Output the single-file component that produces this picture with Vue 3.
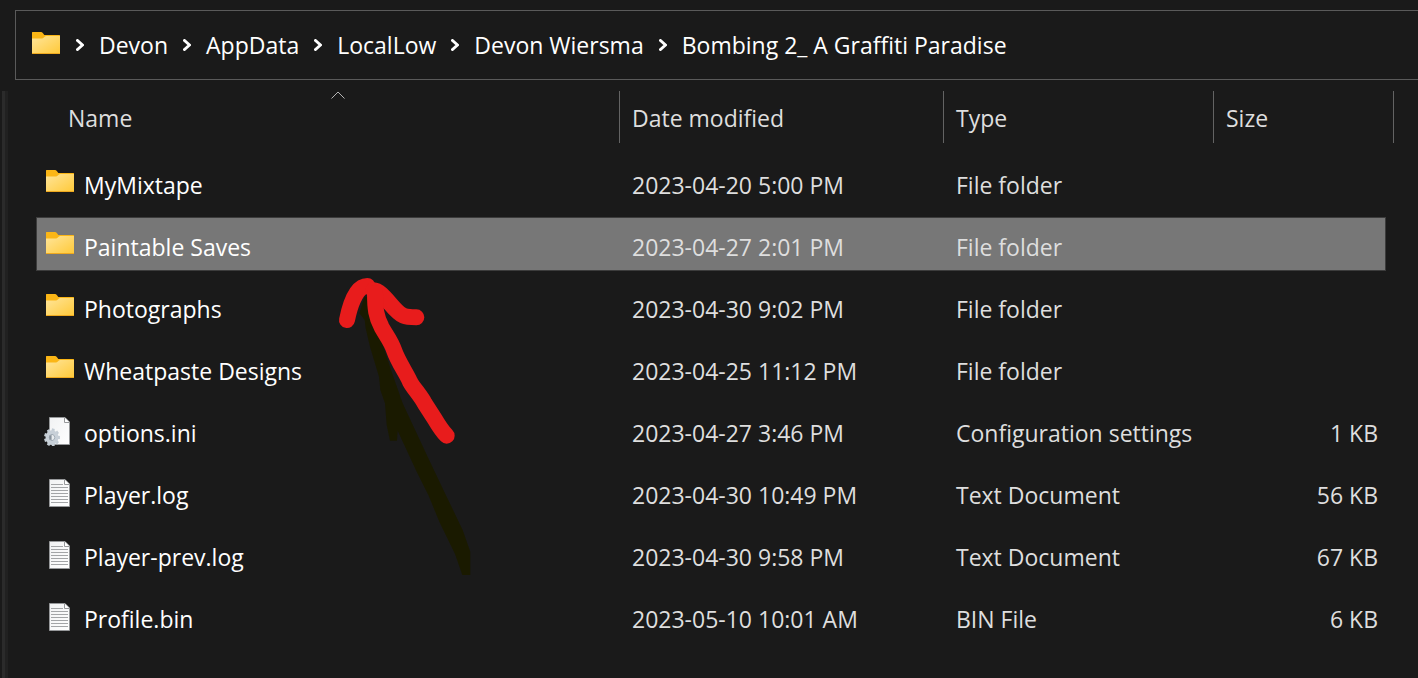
<script setup>
import { ref } from 'vue'

const crumbs = ['Devon', 'AppData', 'LocalLow', 'Devon Wiersma', 'Bombing 2_ A Graffiti Paradise']

const files = [
  { name: 'MyMixtape', date: '2023-04-20 5:00 PM', type: 'File folder', size: '', icon: 'folder' },
  { name: 'Paintable Saves', date: '2023-04-27 2:01 PM', type: 'File folder', size: '', icon: 'folder' },
  { name: 'Photographs', date: '2023-04-30 9:02 PM', type: 'File folder', size: '', icon: 'folder' },
  { name: 'Wheatpaste Designs', date: '2023-04-25 11:12 PM', type: 'File folder', size: '', icon: 'folder' },
  { name: 'options.ini', date: '2023-04-27 3:46 PM', type: 'Configuration settings', size: '1 KB', icon: 'settings' },
  { name: 'Player.log', date: '2023-04-30 10:49 PM', type: 'Text Document', size: '56 KB', icon: 'text' },
  { name: 'Player-prev.log', date: '2023-04-30 9:58 PM', type: 'Text Document', size: '67 KB', icon: 'text' },
  { name: 'Profile.bin', date: '2023-05-10 10:01 AM', type: 'BIN File', size: '6 KB', icon: 'text' }
]

const selected = ref('Paintable Saves')
const teeth = [10, 50, 90, 130, 170, 210, 250, 290, 330]
</script>

<template>
  <div class="explorer">
    <svg class="defs" width="0" height="0" aria-hidden="true">
      <defs>
        <linearGradient id="folder-front" x1="0" y1="0" x2="1" y2="1">
          <stop offset="0" stop-color="#ffe59a" />
          <stop offset="1" stop-color="#ffc938" />
        </linearGradient>
        <linearGradient id="sheet" x1="0" y1="0" x2="1" y2="1">
          <stop offset="0" stop-color="#f1f2f3" />
          <stop offset="1" stop-color="#ffffff" />
        </linearGradient>
        <symbol id="icon-folder" viewBox="0 0 32 32">
          <path d="M2 5.500Q2 5 2.500 5H11Q12 5 13 6.300L14.300 8H29.500Q30 8 30 8.500V20H2Z" fill="#fbb616" />
          <path d="M2 11.500H12Q13 11.500 13.800 10.500Q15 9 16 9H30V26.500Q30 27 29.500 27H2.500Q2 27 2 26.500Z" fill="url(#folder-front)" />
          <path d="M2 26H30V26.500Q30 27 29.500 27H2.500Q2 27 2 26.500Z" fill="#efa91f" />
        </symbol>
        <symbol id="icon-sheet" viewBox="0 0 32 32">
          <path d="M5.500 3.500H21L25.500 8V30.500H5.500Z" fill="url(#sheet)" stroke="#96989a" />
          <path d="M20.500 3.500V8.500H25.500" fill="#ffffff" stroke="#96989a" />
        </symbol>
      </defs>
    </svg>

    <nav class="address" aria-label="Address">
      <svg class="icon" aria-hidden="true"><use href="#icon-folder" /></svg>
      <template v-for="crumb in crumbs" :key="crumb">
        <svg class="chevron" viewBox="0 0 8 12" aria-hidden="true"><path d="M1.500 1.500L6.500 6L1.500 10.500" /></svg>
        <a href="#" @click.prevent>{{ crumb }}</a>
      </template>
    </nav>

    <main class="pane">
      <table class="files">
        <thead>
          <tr>
            <th class="name-head" aria-sort="ascending">
              <svg class="sort" viewBox="0 0 14 8" aria-hidden="true"><path d="M0.500 7.500L7 1L13.500 7.500" /></svg>
              <button type="button">Name</button>
            </th>
            <th><button type="button">Date modified</button></th>
            <th><button type="button">Type</button></th>
            <th><button type="button">Size</button></th>
          </tr>
        </thead>
        <tbody>
          <tr
            v-for="file in files"
            :key="file.name"
            :class="{ selected: file.name === selected }"
            @click="selected = file.name"
          >
            <td class="name">
              <svg v-if="file.icon === 'folder'" class="icon" aria-hidden="true"><use href="#icon-folder" /></svg>
              <svg v-else-if="file.icon === 'text'" class="icon sheet" viewBox="0 0 32 32" aria-hidden="true">
                <use href="#icon-sheet" />
                <path d="M7 8.500H19M7 11.500H24M7 14.500H24M7 17.500H24M7 20.500H24M7 23.500H24M7 26.500H24" stroke="#a3a5a7" />
              </svg>
              <svg v-else class="icon sheet" viewBox="0 0 32 32" aria-hidden="true">
                <use href="#icon-sheet" />
                <g transform="translate(8 23.500) scale(0.880 1)">
                  <rect v-for="angle in teeth" :key="angle" x="-1.600" y="-9" width="3.200" height="4" fill="#c3ccd4" :transform="`rotate(${angle})`" />
                  <circle r="5.300" fill="none" stroke="#c8d0d8" stroke-width="4" />
                  <circle r="3.100" fill="#e9ecef" stroke="#9aa5b0" />
                  <path d="M-0.500 -2.600A2.600 2.600 0 0 0 -0.500 2.600Z" fill="#87919b" />
                </g>
              </svg>
              <span>{{ file.name }}</span>
            </td>
            <td>{{ file.date }}</td>
            <td>{{ file.type }}</td>
            <td class="size">{{ file.size }}</td>
          </tr>
        </tbody>
      </table>
    </main>

    <svg class="annotation" viewBox="0 0 540 990" aria-hidden="true">
      <path
        d="M133 112H145L190 260L215 335L248 430L290 520L330 605L380 710L428 810L451 875V945H427L405 882L358 785L325 705L290 635L233 512L231 542H210L200 495L195 430L181 390L177 350L150 260L137 205L134 180L118 160Z"
        fill="#1a1a00"
      />
      <g fill="none" stroke="#e81c1c" stroke-width="48" stroke-linecap="round" stroke-linejoin="round">
        <path d="M81 180C86 155 104 78 142 78" />
        <path d="M160 91C190 91 220 155 250 167Q262 172 289 172" />
        <path d="M165 100C165 145 168 170 185 202C198 225 214 245 222 270C234 305 258 338 270 365C280 384 302 407 314 430L343 475Q365 512 380 527" />
      </g>
    </svg>
  </div>
</template>

<style>
body {
  margin: 0;
  background: #1a1a1a;
}
</style>

<style scoped>
.explorer {
  position: relative;
  display: flex;
  flex-direction: column;
  gap: 11px;
  min-height: 100vh;
  box-sizing: border-box;
  padding-top: 10px;
  overflow: hidden;
  background: #1a1a1a;
  color: #ffffff;
  font-family: "Segoe UI", "Open Sans", "Noto Sans", sans-serif;
  font-size: 23px;
  line-height: 32px;
}

.defs {
  position: absolute;
}

.icon {
  flex: none;
  width: 32px;
  height: 32px;
}

.address {
  display: flex;
  align-items: center;
  gap: 15px;
  box-sizing: border-box;
  height: 70px;
  margin-left: 15px;
  padding-left: 14px;
  border: 1px solid #5a5a5a;
  border-right: 0;
  white-space: nowrap;
}

.address .icon {
  margin: 0 -1px 4px 0;
}

.address a {
  color: #ffffff;
  text-decoration: none;
}

.chevron {
  flex: none;
  width: 8px;
  height: 12px;
  fill: none;
  stroke: #ffffff;
  stroke-width: 3;
  stroke-linecap: round;
  stroke-linejoin: round;
}

.pane {
  flex: 1;
  margin-left: 2px;
  padding: 0 24px 24px 32px;
  border-left: 3px solid #2b2b2b;
  box-shadow: inset 3px 0 #212121;
}

.files,
.files thead {
  display: block;
}

.files tbody {
  display: grid;
  gap: 10px;
  margin: 13px 9px 0 0;
}

.files tr {
  display: grid;
  grid-template-columns: minmax(0, 1fr) 324px 270px 181px;
  height: 52px;
}

.files tbody tr {
  grid-template-columns: minmax(0, 1fr) 324px 270px 172px;
  box-sizing: border-box;
}

.files tbody .selected {
  background: #777777;
  box-shadow: 0 0 0 1px #3c3c3c;
}

.files th {
  position: relative;
  display: flex;
  padding: 2px 0 0 12px;
  border-left: 1px solid #636363;
  font-weight: 400;
}

.files th:last-child {
  border-right: 1px solid #636363;
}

.files .name-head {
  padding-left: 31px;
  border-left: 0;
}

.files th button {
  flex: 1;
  padding: 0;
  border: 0;
  background: none;
  color: #dedede;
  font: inherit;
  text-align: left;
}

.sort {
  position: absolute;
  top: 0;
  left: calc(50% + 3px);
  width: 14px;
  height: 8px;
  fill: none;
  stroke: #b4b4b4;
}

.files td {
  display: flex;
  align-items: center;
  padding: 6px 0 0 13px;
  color: #dedede;
  white-space: nowrap;
}

.files .name {
  gap: 8px;
  padding-left: 7px;
  color: #ffffff;
}

.files .name .icon {
  margin-bottom: 8px;
}

.files .name .sheet {
  margin-bottom: 6px;
}

.files .size {
  justify-content: flex-end;
  padding-right: 7px;
}

.annotation {
  position: absolute;
  top: 260px;
  left: 320px;
  width: 180px;
  height: 330px;
  pointer-events: none;
}
</style>
